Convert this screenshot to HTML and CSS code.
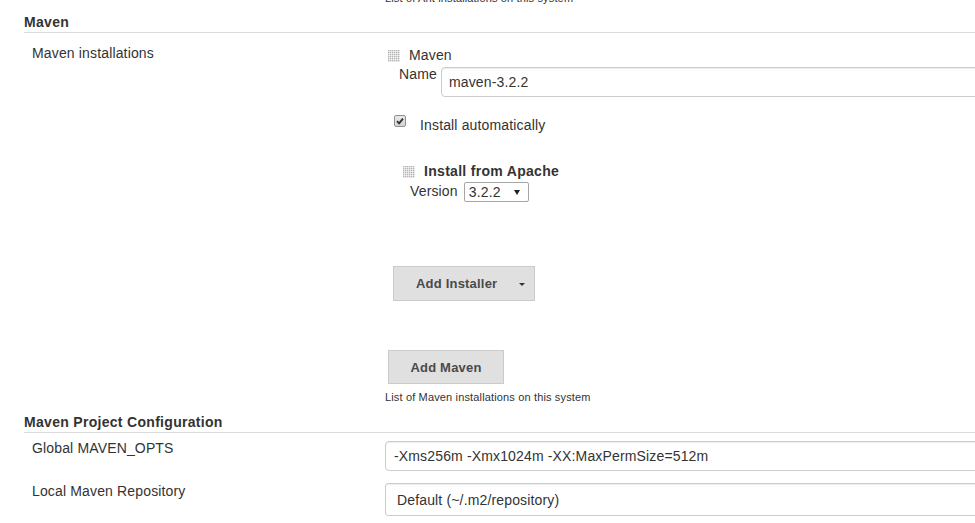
FILE: index.html
```
<!DOCTYPE html>
<html>
<head>
<meta charset="utf-8">
<link rel="stylesheet" href="styles.css">
</head>
<body>
<div class="page">
  <div class="help help-top">List of Ant installations on this system</div>

  <div class="section-header first">Maven</div>
  <div class="row row-installations">
    <div class="label">Maven installations</div>
    <div class="value value-installations">
      <div class="chunk-head">
        <span class="handle"><svg width="12" height="12" viewBox="0 0 12 12"><defs><pattern id="dots" width="2" height="2" patternUnits="userSpaceOnUse"><rect width="2" height="2" fill="#f4f4f4"/><rect width="1" height="1" fill="#b4b4b4"/><rect x="1" y="0" width="1" height="1" fill="#dedede"/><rect x="0" y="1" width="1" height="1" fill="#dedede"/></pattern></defs><rect width="12" height="12" fill="url(#dots)"/></svg></span>
        <span>Maven</span>
      </div>
      <div class="name-row">
        <span class="name-label">Name</span>
        <div class="text-input name-input">maven-3.2.2</div>
      </div>
      <div class="check-row">
        <span class="checkbox"><svg width="10" height="10" viewBox="0 0 10 10"><path d="M2 5.2 L4.1 7.3 L8 2.6" fill="none" stroke="#333" stroke-width="1.9"/></svg></span>
        <span class="check-label">Install automatically</span>
      </div>
      <div class="installer">
        <div class="chunk-head bold">
          <span class="handle"><svg width="12" height="12" viewBox="0 0 12 12"><rect width="12" height="12" fill="url(#dots)"/></svg></span>
          <span>Install from Apache</span>
        </div>
        <div class="version-row">
          <span class="version-label">Version</span>
          <span class="small-select">3.2.2<span class="select-arrow"></span></span>
        </div>
      </div>
      <div class="btn btn-installer">Add Installer<span class="caret"></span></div>
      <div class="btn btn-maven">Add Maven</div>
      <div class="help help-maven">List of Maven installations on this system</div>
    </div>
  </div>

  <div class="section-header second">Maven Project Configuration</div>
  <div class="row row-opts">
    <div class="label">Global MAVEN_OPTS</div>
    <div class="value">
      <div class="text-input opts-input">-Xms256m -Xmx1024m -XX:MaxPermSize=512m</div>
    </div>
  </div>
  <div class="row row-repo">
    <div class="label">Local Maven Repository</div>
    <div class="value">
      <div class="text-input repo-select">Default (~/.m2/repository)</div>
    </div>
  </div>
</div>
</body>
</html>
```
FILE: styles.css
```
html, body {
  margin: 0;
  padding: 0;
  background: #fff;
  overflow: hidden;
}

body {
  font-family: "Liberation Sans", Arial, sans-serif;
  font-size: 14px;
  line-height: 17px;
  color: #333;
  letter-spacing: 0.15px;
}

.page {
  width: 1040px;
}

.help {
  font-size: 11px;
  line-height: 13px;
  color: #333;
  letter-spacing: 0.15px;
}

.help-top {
  margin-top: -8px;
  margin-left: 385px;
}

.section-header {
  margin-left: 24px;
  font-weight: bold;
  letter-spacing: 0.3px;
  padding-bottom: 1px;
  border-bottom: 1px solid #dcdcdc;
}

.section-header.first {
  margin-top: 9px;
}

.section-header.second {
  margin-top: 10px;
}

.row {
  display: grid;
  grid-template-columns: 385px 1fr;
}

.label {
  padding-left: 32px;
}

.row-installations {
  padding-top: 12px;
}

.value-installations {
  padding-top: 2px;
  display: flex;
  flex-direction: column;
  align-items: flex-start;
}

.chunk-head {
  display: flex;
  align-items: center;
  height: 17px;
}

.chunk-head .handle {
  margin-left: 3px;
  margin-right: 9px;
}

.chunk-head.bold {
  font-weight: bold;
  letter-spacing: 0.3px;
}

.handle {
  display: inline-flex;
  width: 12px;
  height: 12px;
}

.name-row {
  display: flex;
  align-items: flex-start;
  margin-top: 2px;
  align-self: stretch;
}

.name-label {
  margin-left: 14px;
}

.text-input {
  box-sizing: border-box;
  border: 1px solid #ccc;
  border-radius: 4px;
  background: #fff;
  box-shadow: inset 0 1px 1px rgba(0, 0, 0, 0.075);
  display: flex;
  align-items: center;
  white-space: nowrap;
}

.name-input {
  flex: 1;
  margin-left: 4px;
  margin-top: 1px;
  height: 30px;
  padding-left: 7px;
}

.check-row {
  display: flex;
  align-items: flex-start;
  margin-top: 20px;
}

.checkbox {
  box-sizing: border-box;
  width: 12px;
  height: 12px;
  margin-left: 9px;
  margin-top: -2px;
  border: 1px solid #8f8f8f;
  border-radius: 2px;
  background: linear-gradient(#e9e9e9, #d4d4d4);
  display: flex;
  align-items: center;
  justify-content: center;
}

.check-label {
  margin-left: 14px;
}

.installer {
  margin-top: 29px;
}

.installer .chunk-head .handle {
  margin-left: 18px;
}

.version-row {
  display: flex;
  align-items: flex-start;
  margin-top: 2px;
}

.version-label {
  margin-left: 25px;
  margin-top: 1px;
}

.small-select {
  box-sizing: border-box;
  width: 65px;
  height: 20px;
  margin-left: 6px;
  border: 1px solid #a6a6a6;
  border-radius: 2px;
  padding-left: 4px;
  display: flex;
  align-items: center;
  justify-content: space-between;
  padding-right: 8px;
  line-height: 18px;
}

.select-arrow {
  width: 0;
  height: 0;
  border-left: 3.5px solid transparent;
  border-right: 3.5px solid transparent;
  border-top: 5px solid #222;
}

.btn {
  box-sizing: border-box;
  height: 34px;
  background: #e0e0e0;
  border: 1px solid #cbcbcb;
  color: #4a4a4a;
  font-weight: bold;
  font-size: 13px;
  letter-spacing: 0.2px;
  display: flex;
  align-items: center;
}

.btn-installer {
  margin-top: 64px;
  margin-left: 8px;
  width: 142px;
  height: 35px;
  padding-left: 22px;
}

.caret {
  width: 0;
  height: 0;
  margin-left: 22px;
  margin-top: 2px;
  border-left: 3.5px solid transparent;
  border-right: 3.5px solid transparent;
  border-top: 3.5px solid #333;
}

.btn-maven {
  margin-top: 49px;
  margin-left: 3px;
  width: 116px;
  justify-content: center;
}

.help-maven {
  margin-top: 7px;
}

.row-opts {
  padding-top: 7px;
}

.opts-input {
  margin-top: 1px;
  height: 30px;
  padding-left: 8px;
}

.row-repo {
  padding-top: 12px;
}

.repo-select {
  height: 33px;
  padding-left: 11px;
  padding-top: 1px;
  border-radius: 3px;
}
```
